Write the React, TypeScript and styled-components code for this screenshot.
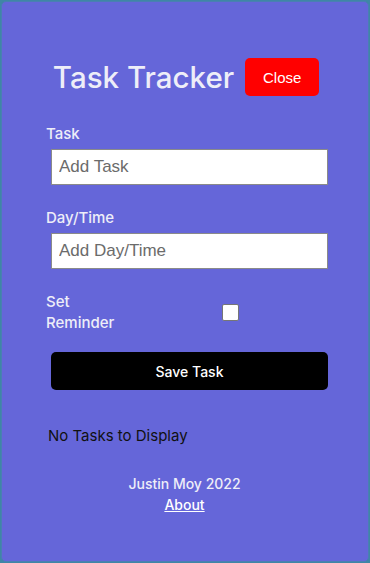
import styled, { createGlobalStyle } from "styled-components";

const GlobalStyle = createGlobalStyle`
  *, *::before, *::after {
    box-sizing: border-box;
  }

  html, body {
    margin: 0;
    padding: 0;
    height: 100%;
    background: #3f86a6;
    font-family: Inter, "Noto Sans", Arial, sans-serif;
  }
`;

const Panel = styled.div`
  margin: 1px;
  height: 561px;
  background: #6566d9;
  border: 1px solid #4a7fb3;
  border-radius: 5px;
  padding: 0 45px 0 44px;
  overflow: hidden;
`;

const Header = styled.header`
  display: flex;
  justify-content: center;
  align-items: center;
  gap: 11px;
  margin-top: 56px;
  padding-left: 3px;
`;

const Title = styled.h1`
  margin: 0;
  font-size: 29.5px;
  line-height: 38px;
  font-weight: 500;
  color: #eeeef8;
`;

const Button = styled.button<{ $bg: string; $block?: boolean }>`
  display: ${(p) => (p.$block ? "block" : "inline-block")};
  width: ${(p) => (p.$block ? "277px" : "74px")};
  height: 38px;
  margin: ${(p) => (p.$block ? "0 0 0 5px" : "0")};
  border: none;
  border-radius: 5px;
  background: ${(p) => p.$bg};
  color: #fff;
  font-size: 14px;
  cursor: pointer;
`;

const CloseButton = styled(Button)`
  flex-shrink: 0;
  font-family: "Liberation Sans", Arial, sans-serif;
  font-size: 15px;
`;

const SaveButton = styled(Button)`
  font-family: Inter, "Noto Sans", sans-serif;
  font-weight: 500;
  margin-top: 19px;
`;

const Form = styled.form`
  margin-top: 28px;
`;

const Field = styled.div<{ $gap?: number }>`
  margin-top: ${(p) => p.$gap ?? 0}px;
`;

const Label = styled.label`
  display: block;
  font-size: 15px;
  line-height: 20px;
  font-weight: 500;
  color: #eeeef8;
`;

const Input = styled.input`
  display: block;
  width: 277px;
  height: 36px;
  margin: 5px 0 0 5px;
  padding: 3px 7px;
  border: 1px solid #8a8a8a;
  border-radius: 0;
  background: #fff;
  font-family: "Liberation Sans", Arial, sans-serif;
  font-size: 17px;
  color: #333;

  &::placeholder {
    color: #6b6b6b;
  }
`;

const CheckRow = styled.div`
  display: flex;
  align-items: center;
  margin-top: 22px;
`;

const CheckLabel = styled.label`
  flex: 1;
  font-size: 15px;
  line-height: 21px;
  font-weight: 500;
  color: #eeeef8;
`;

const CheckCell = styled.div`
  flex: 2;
  display: flex;
  justify-content: center;
`;

const Checkbox = styled.input`
  appearance: none;
  width: 17px;
  height: 17px;
  margin: 0 0 0 -1px;
  background: #fff;
  border: 1px solid #767676;
  border-radius: 2px;
`;

const Empty = styled.p`
  margin: 36px 0 0 2px;
  font-size: 15px;
  line-height: 20px;
  color: #111;
`;

const Footer = styled.footer`
  margin-top: 27px;
  text-align: center;
  font-size: 14px;
  line-height: 21px;
  font-weight: 500;
  color: #eeeef8;
`;

const Link = styled.a`
  color: #fff;
  text-decoration: underline;
`;

export default function App() {
  return (
    <>
      <GlobalStyle />
      <Panel>
        <Header>
          <Title>Task Tracker</Title>
          <CloseButton $bg="#ff0000">Close</CloseButton>
        </Header>
        <Form onSubmit={(e) => e.preventDefault()}>
          <Field>
            <Label>Task</Label>
            <Input type="text" placeholder="Add Task" />
          </Field>
          <Field $gap={23}>
            <Label>Day/Time</Label>
            <Input type="text" placeholder="Add Day/Time" />
          </Field>
          <CheckRow>
            <CheckLabel>
              Set
              <br />
              Reminder
            </CheckLabel>
            <CheckCell>
              <Checkbox type="checkbox" />
            </CheckCell>
          </CheckRow>
          <SaveButton $bg="#000" $block type="submit">
            Save Task
          </SaveButton>
        </Form>
        <Empty>No Tasks to Display</Empty>
        <Footer>
          <div>Justin Moy 2022</div>
          <Link href="#about">About</Link>
        </Footer>
      </Panel>
    </>
  );
}
